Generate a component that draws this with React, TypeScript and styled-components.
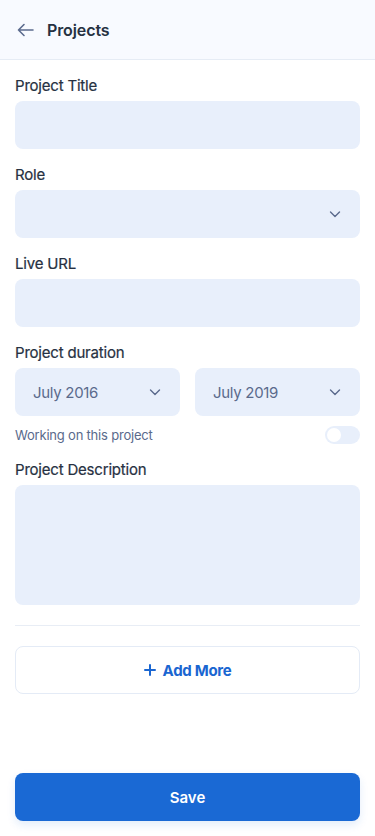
import React from "react";
import styled, { createGlobalStyle } from "styled-components";

const Global = createGlobalStyle`
  * { box-sizing: border-box; }
  html, body { margin: 0; padding: 0; background: #ffffff; }
  body { font-family: Inter, "Noto Sans", sans-serif; -webkit-font-smoothing: antialiased; }
`;

const Page = styled.div`
  width: 375px;
  height: 836px;
  display: flex;
  flex-direction: column;
  background: #ffffff;
`;

const Header = styled.header`
  height: 60px;
  display: flex;
  align-items: center;
  gap: 12px;
  padding: 0 15px;
  background: #f8faff;
  border-bottom: 1px solid #e6ecf5;
`;

const BackButton = styled.button`
  border: 0;
  background: none;
  padding: 0;
  width: 20px;
  height: 20px;
  display: flex;
  align-items: center;
  justify-content: center;
  color: #5b6b8e;
`;

const Title = styled.h1`
  margin: 0;
  font-size: 16px;
  font-weight: 600;
  color: #263142;
  letter-spacing: -0.1px;
`;

const Form = styled.div`
  flex: 1;
  display: flex;
  flex-direction: column;
  padding: 16px 15px 0;
`;

const Field = styled.div`
  display: flex;
  flex-direction: column;
  gap: 5px;
  margin-bottom: 16px;
`;

const Label = styled.label`
  font-size: 15px;
  line-height: 20px;
  font-weight: 400;
  color: #273142;
  letter-spacing: -0.2px;
  -webkit-text-stroke: 0.2px #273142;
`;

const Box = styled.div<{ $h?: number }>`
  height: ${(p) => p.$h ?? 48}px;
  border-radius: 8px;
  background: #e8effb;
  display: flex;
  align-items: center;
  justify-content: space-between;
  padding: 0 18px;
  color: #5a6a8c;
  font-size: 15px;
  letter-spacing: -0.3px;
`;

const Row = styled.div`
  display: grid;
  grid-template-columns: 1fr 1fr;
  gap: 15px;
`;

const ToggleRow = styled.div`
  display: flex;
  align-items: center;
  justify-content: space-between;
  margin-top: -6px;
  margin-bottom: 16px;
  height: 18px;
`;

const ToggleText = styled.span`
  font-size: 13px;
  color: #5a6a8c;
  letter-spacing: -0.2px;
`;

const Switch = styled.div`
  width: 35px;
  height: 18px;
  border-radius: 9px;
  background: #e8effb;
  padding: 2px;
  display: flex;
  align-items: center;
`;

const Knob = styled.div`
  width: 14px;
  height: 14px;
  border-radius: 50%;
  background: #ffffff;
`;

const Divider = styled.hr`
  border: 0;
  border-top: 1px solid #e8edf5;
  margin: 4px 0 20px;
`;

const AddMore = styled.button`
  height: 48px;
  border: 1px solid #e4ebf6;
  border-radius: 8px;
  background: #ffffff;
  display: flex;
  align-items: center;
  justify-content: center;
  gap: 7px;
  color: #1a66d1;
  font-family: inherit;
  font-size: 15px;
  font-weight: 700;
  letter-spacing: -0.3px;
`;

const Footer = styled.div`
  padding: 0 15px 15px;
`;

const SaveButton = styled.button`
  width: 100%;
  height: 48px;
  border: 0;
  border-radius: 8px;
  background: #1a69d4;
  color: #ffffff;
  font-family: inherit;
  font-size: 15px;
  font-weight: 600;
  box-shadow: 0 4px 8px rgba(26, 105, 212, 0.12);
`;

const Chevron = () => (
  <svg width="14" height="14" viewBox="0 0 14 14" fill="none">
    <path d="M2.5 5l4.5 4.5L11.5 5" stroke="#5a6a8c" strokeWidth="1.4" strokeLinecap="round" strokeLinejoin="round" />
  </svg>
);

export default function App() {
  return (
    <Page>
      <Global />
      <Header>
        <BackButton aria-label="Back">
          <svg width="17" height="14" viewBox="0 0 17 14" fill="none">
            <path d="M16 7H1.5M7 1.5L1.5 7 7 12.5" stroke="#5b6b8e" strokeWidth="1.6" strokeLinecap="round" strokeLinejoin="round" />
          </svg>
        </BackButton>
        <Title>Projects</Title>
      </Header>
      <Form>
        <Field>
          <Label>Project Title</Label>
          <Box />
        </Field>
        <Field>
          <Label>Role</Label>
          <Box>
            <span />
            <Chevron />
          </Box>
        </Field>
        <Field>
          <Label>Live URL</Label>
          <Box />
        </Field>
        <Field>
          <Label>Project duration</Label>
          <Row>
            <Box>
              <span>July 2016</span>
              <Chevron />
            </Box>
            <Box>
              <span>July 2019</span>
              <Chevron />
            </Box>
          </Row>
        </Field>
        <ToggleRow>
          <ToggleText>Working on this project</ToggleText>
          <Switch>
            <Knob />
          </Switch>
        </ToggleRow>
        <Field>
          <Label>Project Description</Label>
          <Box $h={120} />
        </Field>
        <Divider />
        <AddMore>
          <svg width="12" height="12" viewBox="0 0 12 12" fill="none">
            <path d="M6 1v10M1 6h10" stroke="#1a66d1" strokeWidth="2" strokeLinecap="round" />
          </svg>
          Add More
        </AddMore>
      </Form>
      <Footer>
        <SaveButton>Save</SaveButton>
      </Footer>
    </Page>
  );
}
